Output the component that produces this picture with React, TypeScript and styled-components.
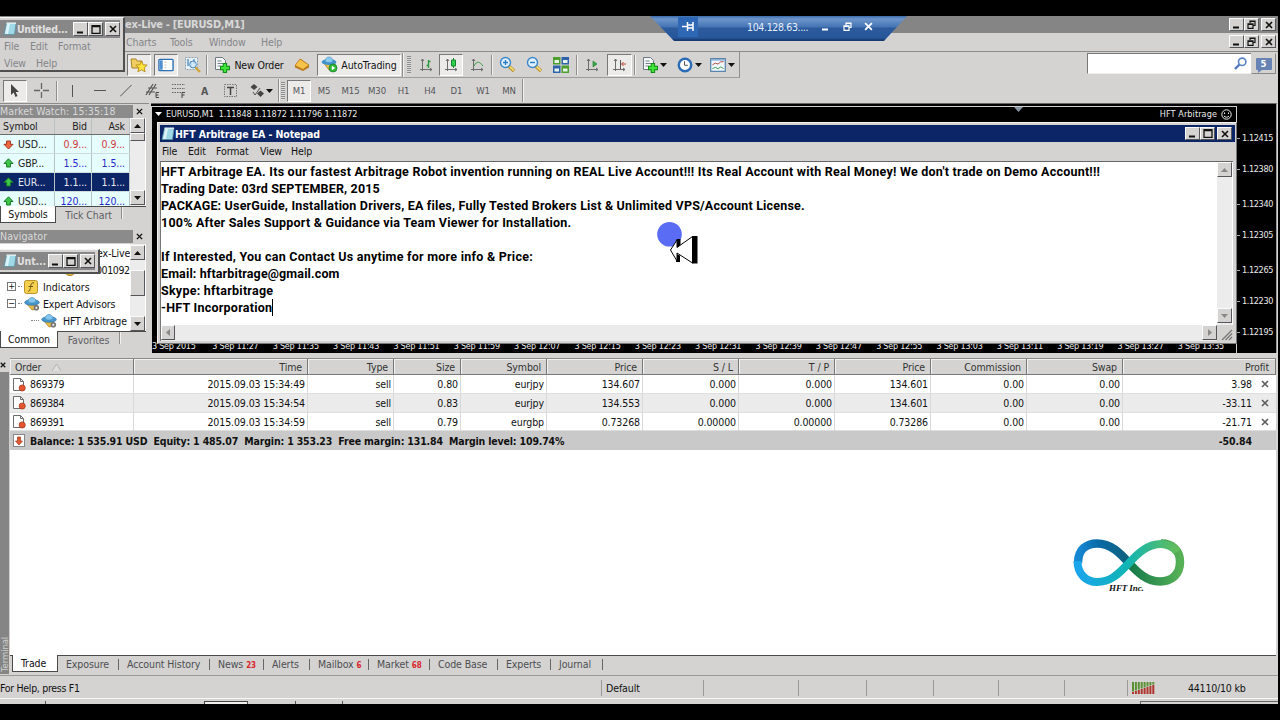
import React from "react";
import styled, { createGlobalStyle, css } from "styled-components";

const Global = createGlobalStyle`
  body { margin: 0; background: #000; }
  * { box-sizing: border-box; }
  svg { display: block; flex: none; }
`;

const ui = `"DejaVu Sans Condensed", "DejaVu Sans", sans-serif`;
const face = "#d4d3d1";

const raised = css`
  background: ${face};
  border: 1px solid;
  border-color: #fbfbfb #55565a #55565a #fbfbfb;
`;
const sunken = css`
  background: #ecebea;
  border: 1px solid;
  border-color: #77787a #fff #fff #77787a;
`;

const Screen = styled.div`
  position: relative;
  width: 1280px;
  height: 720px;
  padding-top: 16px;
  background: #000;
  overflow: hidden;
  font: 10.5px/14px ${ui};
  letter-spacing: -0.1px;
  color: #111;
  white-space: nowrap;
`;
const Desktop = styled.div`
  display: flex;
  flex-direction: column;
  width: 1278px;
  height: 688px;
  background: ${face};
  overflow: hidden;
`;

const T = styled.span<{ $ls?: number; $color?: string }>`
  display: block;
  flex: none;
  letter-spacing: ${(p) => p.$ls ?? -0.1}px;
  color: ${(p) => p.$color ?? "inherit"};
`;

/* ---------- main window bars ---------- */
const TitleBar = styled.div`
  flex: none;
  display: flex;
  align-items: center;
  justify-content: space-between;
  height: 17px;
  padding: 0 2px 0 125px;
  background: #858585;
  color: #d8d8d8;
  font-weight: bold;
  font-size: 11px;
`;
const MenuBar = styled.div`
  flex: none;
  display: flex;
  align-items: center;
  height: 19px;
  padding: 0 2px 1px 126px;
  border-bottom: 1px solid #8c8c8c;
  color: #85868a;
`;
const MenuItem = styled.div<{ $w: number }>`
  flex: none;
  width: ${(p) => p.$w}px;
`;
const Buttons = styled.div`
  display: flex;
  margin-left: auto;
`;
const CaptionButton = styled.div<{ $w?: number; $gap?: number; $h?: number }>`
  ${raised}
  display: flex;
  align-items: center;
  justify-content: center;
  width: ${(p) => p.$w ?? 15}px;
  height: ${(p) => p.$h ?? 13}px;
  margin-left: ${(p) => p.$gap ?? 0}px;
`;

const Minimize = ({ c = "#111" }: { c?: string }) => (
  <svg width="9" height="9" viewBox="0 0 9 9"><path d="M1 7.5h6" stroke={c} strokeWidth="2" /></svg>
);
const Maximize = () => (
  <svg width="10" height="9" viewBox="0 0 10 9"><path d="M1 .5h8v8H1zM1 1.5h8" stroke="#111" strokeWidth="1.3" fill="none" /></svg>
);
const Restore = ({ c = "#111" }: { c?: string }) => (
  <svg width="9" height="9" viewBox="0 0 9 9"><path d="M3 3V1h5v4.5H6.2M1 3.8h5v4.5H1zM1 4.4h5M3 1.4h5" stroke={c} strokeWidth="1.2" fill="none" /></svg>
);
const Cross = ({ c = "#111", s = 8 }: { c?: string; s?: number }) => (
  <svg width={s} height={s} viewBox="0 0 8 8"><path d="M1 1l6 6M7 1L1 7" stroke={c} strokeWidth="1.6" /></svg>
);
const Caret = ({ up, c = "#111" }: { up?: boolean; c?: string }) => (
  <svg width="7" height="4" viewBox="0 0 7 4"><path d={up ? "M0 4h7L3.5 0z" : "M0 0h7L3.5 4z"} fill={c} /></svg>
);
const NoteIcon = () => (
  <svg width="14" height="14" viewBox="0 0 14 14">
    <path d="M3.5 1.5h9.5l-1.5 11H1z" fill="#9fd8e6" stroke="#5e8fa0" strokeWidth=".8" />
    <path d="M4 2h3L5 12H2z" fill="#d9f3f8" />
    <path d="M3.5 1.2h9.5" stroke="#eaf8fb" strokeWidth="1.4" />
  </svg>
);

/* ---------- toolbars ---------- */
const Toolbar = styled.div<{ $h: number; $pl: number; $w?: number }>`
  flex: none;
  display: flex;
  align-items: center;
  height: ${(p) => p.$h}px;
  padding-left: ${(p) => p.$pl}px;
`;
const Band = styled.div<{ $h: number }>`
  flex: none;
  display: flex;
  align-items: center;
  height: ${(p) => p.$h}px;
  border-right: 1px solid #8f8f8f;
  border-bottom: 1px solid #9c9c9c;
`;
const Slot = styled.div<{ $w: number; $on?: boolean; $ml?: number; $gap?: number }>`
  flex: none;
  display: flex;
  align-items: center;
  justify-content: center;
  gap: ${(p) => p.$gap ?? 2}px;
  width: ${(p) => p.$w}px;
  height: 22px;
  margin-left: ${(p) => p.$ml ?? 0}px;
  ${(p) => p.$on && sunken}
`;
const Sep = styled.div<{ $ml?: number; $h?: number }>`
  flex: none;
  width: 2px;
  height: ${(p) => p.$h ?? 20}px;
  margin-left: ${(p) => p.$ml ?? 0}px;
  border-left: 1px solid #8d8d8d;
  border-right: 1px solid #f2f2f2;
`;
const Grip = styled.div<{ $tight?: boolean }>`
  flex: none;
  width: 4px;
  height: 18px;
  margin: ${(p) => (p.$tight ? "0 2px 0 1px" : "0 3px")};
  background: repeating-linear-gradient(#8a8a8a 0 1px, #dedede 1px 2px);
`;
const Period = styled(Slot)`
  color: #55565a;
  font-size: 9.5px;
`;
const SearchBox = styled.div`
  display: flex;
  align-items: center;
  justify-content: flex-end;
  width: 164px;
  height: 21px;
  margin: -3px 0 0 auto;
  padding-right: 4px;
  background: #fff;
  border: 1px solid #77787a;
  border-right: 0;
  border-bottom-color: #eee;
`;
const ChatButton = styled.div`
  ${raised}
  display: flex;
  align-items: center;
  justify-content: center;
  width: 25px;
  height: 21px;
  margin: -3px 2px 0 0;
  border-color: ${face} #888 #888 ${face};
`;
const ChatBubble = styled.div`
  position: relative;
  width: 16px;
  height: 12px;
  border-radius: 1px;
  background: #6683b4;
  color: #fff;
  font: bold 9.5px/12px ${ui};
  text-align: center;
  &::after {
    content: "";
    position: absolute;
    left: 2px;
    top: 12px;
    border-top: 3px solid #6683b4;
    border-right: 4px solid transparent;
  }
`;

const Axes = ({ children }: { children?: React.ReactNode }) => (
  <svg width="15" height="16" viewBox="0 0 15 16">
    <path d="M3.5 2v12M1 12.5h12M2 4l1.5-2L5 4M11 11l2 1.5L11 14" stroke="#6c6c6c" fill="none" />
    {children}
  </svg>
);
const Lens = ({ minus }: { minus?: boolean }) => (
  <svg width="17" height="17" viewBox="0 0 17 17">
    <path d="M9.5 10l5.5 5" stroke="#b8912e" strokeWidth="3.4" />
    <path d="M10.5 10.5l4.3 4" stroke="#ffe57a" strokeWidth="1.6" />
    <circle cx="6.5" cy="6.5" r="5" fill="#dff1ff" stroke="#3c86c8" strokeWidth="1.4" />
    <path d={minus ? "M4 6.5h5" : "M4 6.5h5M6.5 4v5"} stroke="#2e7cc0" strokeWidth="1.4" />
  </svg>
);
const NewPage = () => (
  <svg width="17" height="18" viewBox="0 0 17 18">
    <path d="M1.5 1.5h7l3 3v9h-10z" fill="#f4f6f7" stroke="#6f7a80" />
    <path d="M3.5 5h4M3.5 7.5h6M3.5 10h3" stroke="#77848c" />
    <path d="M10.9 7v10M6 12h10" stroke="#128b12" strokeWidth="4.4" />
    <path d="M10.9 8v8M7 12h8" stroke="#3ee43b" strokeWidth="2.4" />
  </svg>
);
const Hat = () => (
  <svg width="17" height="16" viewBox="0 0 17 16">
    <path d="M3 8l5 6 5-1v-4z" fill="#e8bd45" stroke="#a3791d" strokeWidth=".7" />
    <ellipse cx="8" cy="6.5" rx="7.4" ry="2.8" fill="#4697cf" stroke="#26699c" strokeWidth=".6" />
    <path d="M4 6c0-6 8-6 8 0-2 1.4-6 1.4-8 0z" fill="#85c6ee" stroke="#3b87bb" strokeWidth=".6" />
    <circle cx="12.3" cy="11.8" r="2.8" fill="#777" />
    <circle cx="12.3" cy="11.8" r="1.1" fill="#eee" />
  </svg>
);

/* ---------- workspace ---------- */
const Workspace = styled.div`
  flex: none;
  display: flex;
  height: 251px;
`;
const Side = styled.div`
  flex: none;
  display: flex;
  flex-direction: column;
  width: 149px;
  border-top: 1px solid #8c8c8c;
`;
const PanelTitle = styled.div<{ $h: number; $mt?: number }>`
  flex: none;
  display: flex;
  align-items: center;
  height: ${(p) => p.$h}px;
  margin-top: ${(p) => p.$mt ?? 0}px;
`;
const PanelName = styled.div`
  width: 133px;
  height: 13px;
  margin-right: 3px;
  background: #8b8b8b;
  color: #d9d9d9;
  line-height: 12px;
`;
const PanelBody = styled.div<{ $h: number }>`
  flex: none;
  display: flex;
  width: 146px;
  height: ${(p) => p.$h}px;
  overflow: hidden;
  background: #fff;
`;
const Quotes = styled.div`
  width: 130px;
`;
const QuoteRow = styled.div<{ $head?: boolean; $sel?: boolean }>`
  display: grid;
  grid-template-columns: 55px 37px 38px;
  height: ${(p) => (p.$head ? 17 : 19)}px;
  align-items: center;
  background: ${(p) => (p.$head ? face : p.$sel ? "#0c2566" : "#e6fdfe")};
  color: ${(p) => (p.$sel ? "#e4e8f4" : "#222")};
  border-bottom: 1px solid ${(p) => (p.$head ? "#6c6c6c" : "#cfdcdd")};
  overflow: hidden;
`;
const QuoteCell = styled.div<{ $color?: string; $left?: boolean }>`
  display: flex;
  align-items: center;
  justify-content: ${(p) => (p.$left ? "flex-start" : "flex-end")};
  gap: 4px;
  height: 100%;
  padding: 0 4px 0 ${(p) => (p.$left ? 3 : 0)}px;
  border-right: 1px solid #b9c2c3;
  color: ${(p) => p.$color ?? "inherit"};
`;
const Scroll = styled.div<{ $w?: number }>`
  flex: none;
  display: flex;
  flex-direction: column;
  width: ${(p) => p.$w ?? 15}px;
  background: #ececec;
`;
const ScrollPart = styled.div<{ $h: number; $mt?: number; $w?: number }>`
  ${raised}
  flex: none;
  display: flex;
  align-items: center;
  justify-content: center;
  width: ${(p) => (p.$w ? p.$w + "px" : "auto")};
  height: ${(p) => p.$h}px;
  margin-top: ${(p) => p.$mt ?? 0}px;
`;
const SideTabs = styled.div`
  flex: none;
  display: flex;
  height: 17px;
  width: 146px;
  color: #5f6064;
  border-top: 1px solid #4a4a4a;
`;
const SideTab = styled.div<{ $on?: boolean; $w: number }>`
  width: ${(p) => p.$w}px;
  text-align: center;
  line-height: 16px;
  ${(p) =>
    p.$on &&
    css`
      margin-top: -1px;
      height: 17px;
      background: #fff;
      color: #111;
      border: 1px solid #4a4a4a;
      border-top: 0;
    `}
`;
const Tree = styled.div`
  width: 130px;
  overflow: hidden;
`;
const TreeRow = styled.div<{ $pl: number; $gap?: number }>`
  display: flex;
  align-items: center;
  gap: ${(p) => p.$gap ?? 5}px;
  height: 17px;
  padding-left: ${(p) => p.$pl}px;
`;
const Expander = styled.div`
  flex: none;
  display: flex;
  align-items: center;
  justify-content: center;
  width: 9px;
  height: 9px;
  border: 1px solid #777;
  font: 9px/7px ${ui};
`;
const Dots = styled.div<{ $w: number }>`
  flex: none;
  width: ${(p) => p.$w}px;
  border-top: 1px dotted #888;
`;

const Chart = styled.div`
  position: relative;
  display: flex;
  width: 1126px;
  height: 250px;
  margin-left: 2px;
  padding-top: 2px;
  background: #000;
  border-top: 1px solid #666;
  border-right: 1px solid #999;
  color: #ececec;
  overflow: hidden;
`;
const Plot = styled.div`
  display: flex;
  flex-direction: column;
  justify-content: space-between;
  width: 1086px;
  border: 1px solid #cfcfcf;
  border-bottom: 0;
`;
const PlotHead = styled.div`
  display: flex;
  align-items: center;
  height: 14px;
  padding: 0 4px 0 3px;
  gap: 4px;
  font-size: 9px;
`;
const TimeAxis = styled.div`
  display: flex;
  height: 14px;
  font-size: 9px;
  line-height: 14px;
`;
const TimeLabel = styled.div`
  flex: none;
  width: 60.35px;
  letter-spacing: -0.25px;
`;
const PriceAxis = styled.div`
  display: flex;
  flex-direction: column;
  padding-top: 24px;
  font-size: 9px;
`;
const Price = styled.div<{ $h: number }>`
  display: flex;
  align-items: center;
  gap: 2px;
  height: 16px;
  margin-bottom: ${(p) => p.$h - 16}px;
  letter-spacing: -0.35px;
  &::before { content: ""; width: 3px; border-top: 1px solid #aaa; }
`;

/* ---------- notepad ---------- */
const Notepad = styled.div`
  position: absolute;
  left: 157px;
  top: 122px;
  display: flex;
  flex-direction: column;
  width: 1080px;
  height: 222px;
  padding: 2px 1px 2px 2px;
  background: ${face};
  border: 1px solid;
  border-color: #f4f4f4 #77787a #77787a #f4f4f4;
`;
const NoteTitle = styled.div`
  flex: none;
  display: flex;
  align-items: center;
  height: 17px;
  padding: 0 3px 0 1px;
  background: #0c2566;
  color: #fff;
  font-weight: bold;
`;
const NoteMenu = styled.div`
  flex: none;
  display: flex;
  height: 19px;
  padding: 2px 0 0 2px;
`;
const NoteBody = styled.div`
  flex: 1;
  display: flex;
  margin-right: 2px;
  border-top: 1px solid #666;
  border-left: 1px solid #777;
  background: #fff;
`;
const NoteText = styled.div`
  width: 1056px;
  padding-top: 1px;
  color: #000;
  font: bold 12.5px/17px Roboto, sans-serif;
`;
const NoteLine = styled.div<{ $ls?: number }>`
  display: flex;
  height: 17px;
  letter-spacing: ${(p) => p.$ls ?? 0}px;
`;
const TextCaret = styled.span`
  width: 1px;
  height: 17px;
  background: #000;
`;
const NoteFoot = styled.div`
  flex: none;
  display: flex;
  justify-content: space-between;
  height: 16px;
  margin-right: 2px;
  background: #ebebeb;
  border-left: 1px solid #777;
`;
const NoteFootEnd = styled.div`
  display: flex;
`;

/* ---------- floating windows ---------- */
const Floating = styled.div<{ $y: number; $w: number; $h: number }>`
  position: absolute;
  left: 0;
  top: ${(p) => p.$y}px;
  width: ${(p) => p.$w}px;
  height: ${(p) => p.$h}px;
  padding: 2px 3px 0 0;
  background: ${face};
  border-top: 1px solid #f6f6f6;
  border-right: 2px solid #4f4f4f;
  border-bottom: 2px solid #4f4f4f;
  color: #85868a;
`;
const FloatTitle = styled.div`
  display: flex;
  align-items: center;
  height: 18px;
  padding: 0 0 0 3px;
  background: #878787;
  color: #e0e0e0;
  font-weight: bold;
`;
const FloatMenu = styled.div`
  display: flex;
  height: 17px;
  padding: 1px 0 0 4px;
`;
const Remote = styled.div`
  position: absolute;
  left: 650px;
  top: 16px;
  display: flex;
  align-items: center;
  width: 257px;
  height: 25px;
  padding-left: 28px;
  padding-bottom: 3px;
  clip-path: polygon(0 0, 100% 0, 234px 100%, 24px 100%);
  background: linear-gradient(#3c6cab 0, #6d95cb 3px, #4474b4 11px, #2c5a9d 12px, #27579b 22px, #173a70 24px);
  color: #e6eefa;
  border-bottom: 1px solid #173a70;
`;
const PinBox = styled.div`
  display: flex;
  align-items: center;
  justify-content: center;
  width: 20px;
  height: 20px;
  margin-right: 49px;
  background: #2e68b5;
`;

/* ---------- terminal ---------- */
const Terminal = styled.div`
  flex: none;
  display: flex;
  height: 322px;
  padding-top: 4px;
  border-bottom: 1px solid #999;
`;
const Rail = styled.div`
  width: 10px;
  display: flex;
  flex-direction: column;
`;
const RailClose = styled.div`
  height: 14px;
  padding: 4px 0 0 0;
`;
const RailName = styled.div`
  width: 9px;
  height: 302px;
  padding-top: 2px;
  writing-mode: vertical-rl;
  transform: rotate(180deg);
  background: #858585;
  color: #cfcfcf;
  font-size: 9.5px;
  line-height: 9px;
`;
const TradePane = styled.div`
  display: flex;
  flex-direction: column;
  width: 1266px;
`;
const columns = "124px 174px 86px 67px 86px 96px 96px 96px 96px 96px 96px 1fr";
const TradeHead = styled.div`
  display: grid;
  grid-template-columns: ${columns};
  height: 17px;
  border-top: 1px solid #8a8a8a;
  border-bottom: 1px solid #77787a;
`;
const HeadCell = styled.div<{ $first?: boolean; $last?: boolean }>`
  display: flex;
  align-items: center;
  justify-content: ${(p) => (p.$first ? "flex-start" : "flex-end")};
  gap: 11px;
  padding: 1px ${(p) => (p.$last ? 6 : 5)}px 0 ${(p) => (p.$first ? 5 : 0)}px;
  border-right: 1px solid #77787a;
  box-shadow: inset 1px 1px 0 #f2f2f2;
  color: #333;
`;
const TradeRow = styled.div<{ $alt?: boolean }>`
  display: grid;
  grid-template-columns: ${columns};
  height: 18.8px;
  background: ${(p) => (p.$alt ? "#ebebeb" : "#fff")};
  border-bottom: 1px solid #dedede;
  line-height: 18px;
`;
const TradeCell = styled.div`
  display: flex;
  align-items: center;
  justify-content: flex-end;
  padding-right: 2px;
  border-right: 1px solid #d9d9d9;
  &:first-child { justify-content: flex-start; gap: 4px; padding-left: 2px; }
  &:last-child { gap: 9px; padding-right: 7px; border-right: 0; }
`;
const Balance = styled.div`
  display: flex;
  align-items: center;
  gap: 5px;
  height: 19px;
  padding: 0 24px 0 3px;
  background: #c9c9c9;
  font-weight: bold;
`;
const Blank = styled.div`
  flex: 1;
  background: #fff;
`;
const TradeTabs = styled.div`
  flex: none;
  display: flex;
  height: 20px;
  border-top: 1px solid #4a4a4a;
  color: #4d4e52;
`;
const TradeTab = styled.div<{ $w: number; $on?: boolean }>`
  position: relative;
  display: flex;
  flex: none;
  gap: 3px;
  width: ${(p) => p.$w}px;
  padding-left: 8px;
  line-height: 16px;
  &::after {
    content: "";
    position: absolute;
    right: 0;
    top: 3px;
    height: 11px;
    border-right: 1px solid #66676a;
  }
  ${(p) =>
    p.$on &&
    css`
      margin: -1px 0 0 2px;
      height: 17px;
      background: #fff;
      color: #111;
      border: 1px solid #4a4a4a;
      border-top: 0;
      &::after { display: none; }
    `}
`;
const Count = styled.span`
  color: #d9262c;
  font: bold 8px/19px ${ui};
`;
const StatusBar = styled.div`
  flex: none;
  display: flex;
  align-items: center;
  height: 22px;
  padding-top: 1px;
`;
const StatusCell = styled.div<{ $w: number; $pl?: number; $line?: boolean }>`
  display: flex;
  flex: none;
  align-items: center;
  gap: 33px;
  width: ${(p) => p.$w}px;
  height: 16px;
  padding-left: ${(p) => p.$pl ?? 4}px;
  border-left: ${(p) => (p.$line === false ? "0" : "1px solid #999")};
`;
const Taskbar = styled.div`
  flex: none;
  display: flex;
  height: 6px;
  border-top: 1px solid #f6f6f6;
  padding-top: 2px;
`;
const Task = styled.div<{ $ml: number; $w: number; $on?: boolean }>`
  width: ${(p) => p.$w}px;
  margin-left: ${(p) => p.$ml}px;
  border-right: 1px solid #555;
  ${(p) => p.$on && "border-left: 1px solid #444; border-top: 1px solid #444; background: #eee;"}
`;
const Tray = styled.div`
  width: 138px;
  margin-left: auto;
  border-top: 1px solid #666;
  border-left: 1px solid #666;
`;

const Overlay = styled.div<{ $x: number; $y: number }>`
  position: absolute;
  left: ${(p) => p.$x}px;
  top: ${(p) => p.$y}px;
`;
const Signature = styled.div`
  margin: -4px 0 0 37px;
  color: #111;
  font: italic bold 9px/9px "Liberation Serif", serif;
`;

const quotes: [string, string, string, string, boolean][] = [
  ["USD...", "0.9...", "0.9...", "#cf3a3a", false],
  ["GBP...", "1.5...", "1.5...", "#2a2acb", false],
  ["EUR...", "1.1...", "1.1...", "#e4e8f4", true],
  ["USD...", "120...", "120...", "#2a2acb", false],
];
const heads = ["Order", "Time", "Type", "Size", "Symbol", "Price", "S / L", "T / P", "Price", "Commission", "Swap", "Profit"];
const trades = [
  ["869379", "2015.09.03 15:34:49", "sell", "0.80", "eurjpy", "134.607", "0.000", "0.000", "134.601", "0.00", "0.00", "3.98"],
  ["869384", "2015.09.03 15:34:54", "sell", "0.83", "eurjpy", "134.553", "0.000", "0.000", "134.601", "0.00", "0.00", "-33.11"],
  ["869391", "2015.09.03 15:34:59", "sell", "0.79", "eurgbp", "0.73268", "0.00000", "0.00000", "0.73286", "0.00", "0.00", "-21.71"],
];
const times = ["2015", "11:27", "11:35", "11:43", "11:51", "11:59", "12:07", "12:15", "12:23", "12:31", "12:39", "12:47", "12:55", "13:03", "13:11", "13:19", "13:27", "13:35"];
const prices: [string, number][] = [["1.12415", 31], ["1.12380", 35], ["1.12340", 31], ["1.12305", 35], ["1.12265", 31], ["1.12230", 31], ["1.12195", 20]];
const notes: [string, number][] = [
  ["HFT Arbitrage EA. Its our fastest Arbitrage Robot invention running on REAL Live Account!!! Its Real Account with Real Money! We don't trade on Demo Account!!!", 0.232],
  ["Trading Date: 03rd SEPTEMBER, 2015", 0.15],
  ["PACKAGE: UserGuide, Installation Drivers, EA files, Fully Tested Brokers List & Unlimited VPS/Account License.", 0.185],
  ["100% After Sales Support & Guidance via Team Viewer for Installation.", 0.21],
  ["", 0],
  ["If Interested, You can Contact Us anytime for more info & Price:", 0.25],
  ["Email: hftarbitrage@gmail.com", 0.13],
  ["Skype: hftarbitrage", 0.25],
  ["-HFT Incorporation", 0.25],
];
const periods: [string, number][] = [["M5", 26], ["M15", 27], ["M30", 26], ["H1", 27], ["H4", 26], ["D1", 27], ["W1", 26], ["MN", 26]];
const tabs: [string, number, string?][] = [["Exposure", 61], ["Account History", 91], ["News", 54, "23"], ["Alerts", 46], ["Mailbox", 59, "6"], ["Market", 61, "68"], ["Code Base", 68], ["Experts", 53], ["Journal", 52]];
const statusCells = [95, 68, 67, 65, 66, 63];

const QuoteArrow = ({ up }: { up: boolean }) => (
  <svg width="11" height="11" viewBox="0 0 11 11">
    <path d={up ? "M5.5 .8L10 5.5H7.4V9H3.6V5.5H1z" : "M5.5 10L10 5.3H7.4V2H3.6v3.3H1z"} fill={up ? "#40c64b" : "#ef6a40"} stroke={up ? "#167a24" : "#a3341c"} />
  </svg>
);
const OrderIcon = () => (
  <svg width="14" height="15" viewBox="0 0 14 15">
    <path d="M1.5 1.5h7l3 3v9h-10z" fill="#fff" stroke="#6b6b6b" />
    <path d="M8.5 1.5v3h3" fill="none" stroke="#6b6b6b" />
    <circle cx="10.2" cy="11" r="3.1" fill="#e4552f" stroke="#9c3318" strokeWidth=".7" />
  </svg>
);

export default function App() {
  return (
    <Screen>
      <Global />
      <Desktop>
        <TitleBar>
          <T $ls={-0.33}>ex-Live - [EURUSD,M1]</T>
          <Buttons>
            <CaptionButton><Minimize /></CaptionButton>
            <CaptionButton><Restore /></CaptionButton>
            <CaptionButton $gap={2}><Cross /></CaptionButton>
          </Buttons>
        </TitleBar>
        <MenuBar>
          <MenuItem $w={44}>Charts</MenuItem>
          <MenuItem $w={39}>Tools</MenuItem>
          <MenuItem $w={52}>Window</MenuItem>
          <MenuItem $w={30}>Help</MenuItem>
          <Buttons>
            <CaptionButton><Minimize /></CaptionButton>
            <CaptionButton><Restore /></CaptionButton>
            <CaptionButton $gap={2}><Cross /></CaptionButton>
          </Buttons>
        </MenuBar>

        <Toolbar $h={26} $pl={0}>
          <Band $h={26}>
            <Slot $w={24} $on $ml={127}>
              <svg width="18" height="18" viewBox="0 0 18 18">
                <path d="M1 3h5l1 2h5v7H2z" fill="#f0cf62" stroke="#a98426" />
                <path d="M11.5 5l1.7 3.7 4 .4-3 2.7.9 4-3.6-2-3.6 2 .9-4-3-2.7 4-.4z" fill="#ffe23e" stroke="#b58c18" strokeWidth=".9" />
              </svg>
            </Slot>
            <Slot $w={24} $on $ml={3}>
              <svg width="16" height="14" viewBox="0 0 17 14">
                <rect x="1" y="1" width="15" height="12" rx="1" fill="#fff" stroke="#2f6fb4" strokeWidth="1.5" />
                <path d="M2 2h3v10H2z" fill="#4d8fd0" />
                <path d="M7 4h2M7 7h2M7 10h2" stroke="#bbb" />
              </svg>
            </Slot>
            <Slot $w={28}>
              <svg width="17" height="17" viewBox="0 0 17 17">
                <path d="M1.5 1.5h12v12h-12z" fill="#e6f0f5" stroke="#93a5ae" strokeDasharray="2 1" />
                <path d="M4 3v7M7 5v6M10 3v5" stroke="#4f88b4" strokeWidth="1.3" />
                <path d="M11 11l5 5" stroke="#d1a63a" strokeWidth="2.4" />
                <circle cx="9" cy="8.5" r="3.4" fill="#cfe9f8cc" stroke="#4c8abb" />
              </svg>
            </Slot>
            <Sep />
            <Slot $w={82} $gap={3}><NewPage /><T $ls={-0.15}>New Order</T></Slot>
            <Slot $w={24}>
              <svg width="16" height="14" viewBox="0 0 16 14">
                <path d="M1 8l6-7 8 6v2.5L9 13 1 9.500z" fill="#b9781c" />
                <path d="M1 7.500L6 1l9 6-6 4.500z" fill="#f5c24a" stroke="#b9781c" strokeWidth=".8" />
              </svg>
            </Slot>
            <Slot $w={84} $on $ml={3} $gap={3}>
              <svg width="17" height="17" viewBox="0 0 17 17">
                <path d="M2 6l6 8 6-3V6z" fill="#e7c04c" stroke="#a3791d" strokeWidth=".7" />
                <ellipse cx="8" cy="6" rx="7.4" ry="3" fill="#3f92cc" />
                <path d="M4 5.5c0-6 8-6 8 0-2 1.6-6 1.6-8 0z" fill="#8ccbf0" stroke="#3b87bb" strokeWidth=".6" />
                <circle cx="12" cy="12" r="4" fill="#2fb93a" stroke="#137a1d" strokeWidth=".7" />
                <path d="M10.8 9.8v4.4l3.4-2.2z" fill="#fff" />
              </svg>
              <T $ls={-0.1}>AutoTrading</T>
            </Slot>
            <Sep $ml={1} $h={24} />
            <Grip />
            <Slot $w={25}><Axes><path d="M9.5 3v8M7.5 8.5h2M9.5 4.5h2" stroke="#2d9a3c" strokeWidth="1.4" /></Axes></Slot>
            <Slot $w={24} $on><Axes><path d="M9.5 1v10" stroke="#14852a" /><path d="M7.5 3h4v6h-4z" fill="#33cf4e" stroke="#14852a" /></Axes></Slot>
            <Slot $w={28}><Axes><path d="M4 9c3-6 6-4 9 0" stroke="#2d9a3c" fill="none" /></Axes></Slot>
            <Sep />
            <Slot $w={28}><Lens /></Slot>
            <Slot $w={26}><Lens minus /></Slot>
            <Slot $w={27}>
              <svg width="16" height="16" viewBox="0 0 16 16">
                <path d="M0 0h7.5v7.5H0zM8.5 8.5H16V16H8.5z" fill="#4c9f2c" />
                <path d="M8.5 0H16v7.5H8.5zM0 8.5h7.5V16H0z" fill="#2f62ad" />
                <path d="M1.5 3h4.500v3h-4.500zM10 3h4.500v3H10zM1.500 11.500H6v3H1.500zM10 11.500h4.500v3H10z" fill="#e6f3e8" />
              </svg>
            </Slot>
            <Sep $ml={2} />
            <Slot $w={29}><Axes><path d="M8 4v6l4-3z" fill="#39a848" stroke="#187a28" strokeWidth=".6" /></Axes></Slot>
            <Slot $w={25} $on><Axes><path d="M8.500 3v9" stroke="#555" /><path d="M14 7h-4M11.500 5L9.500 7l2 2" stroke="#b5482e" fill="none" /></Axes></Slot>
            <Sep $ml={2} />
            <Slot $w={37} $gap={1}><NewPage /><Caret /></Slot>
            <Slot $w={32}>
              <svg width="16" height="16" viewBox="0 0 17 17">
                <circle cx="8.500" cy="8.500" r="6.600" fill="#fff" stroke="#2c6cb6" strokeWidth="2.600" />
                <path d="M8 4.500v4.300h3.500" stroke="#444" fill="none" />
              </svg>
              <Caret />
            </Slot>
            <Slot $w={34}>
              <svg width="16" height="14" viewBox="0 0 17 15">
                <rect x=".7" y=".7" width="15.600" height="13.600" fill="#eef6fb" stroke="#5580a8" strokeWidth="1.300" />
                <path d="M1 2h15" stroke="#7fa9cf" strokeWidth="1.500" />
                <path d="M2.500 7.500l3-2 3 1 3-2.500h3" stroke="#b04636" fill="none" />
                <path d="M2.500 11.500l3-1.500 3 1.500 3-2 3 2" stroke="#3c9a48" fill="none" />
              </svg>
              <Caret />
            </Slot>
          </Band>
          <SearchBox>
            <svg width="13" height="13" viewBox="0 0 13 13">
              <path d="M6 7l-5 5" stroke="#4f78bd" strokeWidth="2.400" />
              <circle cx="8.200" cy="4.800" r="3.700" fill="#fff" stroke="#5b85c8" strokeWidth="1.600" />
            </svg>
          </SearchBox>
          <ChatButton><ChatBubble>5</ChatBubble></ChatButton>
        </Toolbar>

        <Toolbar $h={25} $pl={3}>
          <Slot $w={24} $on>
            <svg width="10" height="15" viewBox="0 0 10 15"><path d="M1 1v11l2.700-2.500L5.500 14l2-1-1.800-4H9z" fill="#444" /></svg>
          </Slot>
          <Slot $w={28}>
            <svg width="15" height="15" viewBox="0 0 15 15"><path d="M7.500 0v6M7.500 9v6M0 7.500h6M9 7.500h6" stroke="#666" strokeWidth="1.300" /></svg>
          </Slot>
          <Sep $ml={1} />
          <Slot $w={29}><svg width="3" height="12" viewBox="0 0 3 12"><path d="M1.500 0v12" stroke="#555" /></svg></Slot>
          <Slot $w={25}><svg width="12" height="3" viewBox="0 0 12 3"><path d="M0 1.500h12" stroke="#555" /></svg></Slot>
          <Slot $w={28}><svg width="12" height="12" viewBox="0 0 12 12"><path d="M0 11.500L11.500 0" stroke="#555" /></svg></Slot>
          <Slot $w={25}>
            <svg width="15" height="15" viewBox="0 0 15 15">
              <path d="M1 12L8 1M4 12l7-11M1 9h9M3 5h9" stroke="#555" strokeWidth="1.200" />
              <path d="M14 9.500h-3v5h3M11 12h2.500" stroke="#444" fill="none" />
            </svg>
          </Slot>
          <Slot $w={27}>
            <svg width="15" height="15" viewBox="0 0 15 15">
              <path d="M1 1.500h13M1 5.500h13M1 9.500h9" stroke="#666" strokeDasharray="1.500 1" />
              <path d="M14 9.500h-3V15M11 12h2.500" stroke="#444" fill="none" />
            </svg>
          </Slot>
          <Slot $w={25}><T $color="#555"><b>A</b></T></Slot>
          <Slot $w={27}>
            <svg width="13" height="13" viewBox="0 0 13 13">
              <rect x=".5" y=".5" width="12" height="12" fill="none" stroke="#777" strokeDasharray="1.500 1" />
              <path d="M3 3.500h7M6.500 3.500V11" stroke="#444" strokeWidth="1.500" />
            </svg>
          </Slot>
          <Slot $w={34}>
            <svg width="14" height="13" viewBox="0 0 14 13">
              <path d="M4 0l3.500 3-3.500 3-3.500-3zM7 9.500l3.500-3L14 9.500 10.500 13z" fill="#444" />
              <path d="M3 8l2 3 5-7" stroke="#555" fill="none" />
            </svg>
            <Caret />
          </Slot>
          <Sep $h={23} />
          <Grip $tight />
          <Period $w={24} $on>M1</Period>
          {periods.map(([p, w]) => <Period key={p} $w={w}>{p}</Period>)}
          <Sep $h={23} />
        </Toolbar>

        <Workspace>
          <Side>
            <PanelTitle $h={14}><PanelName><T $ls={0.1}>Market Watch: 15:35:18</T></PanelName><Cross s={7} /></PanelTitle>
            <PanelBody $h={88}>
              <Quotes>
                <QuoteRow $head>
                  <QuoteCell $left>Symbol</QuoteCell><QuoteCell>Bid</QuoteCell><QuoteCell>Ask</QuoteCell>
                </QuoteRow>
                {quotes.map(([s, b, a, c, sel], i) => (
                  <QuoteRow key={i} $sel={sel}>
                    <QuoteCell $left><QuoteArrow up={i > 0} />{s}</QuoteCell>
                    <QuoteCell $color={c}>{b}</QuoteCell>
                    <QuoteCell $color={c}>{a}</QuoteCell>
                  </QuoteRow>
                ))}
              </Quotes>
              <Scroll>
                <ScrollPart $h={15}><Caret up /></ScrollPart>
                <ScrollPart $h={8} />
                <ScrollPart $h={15} $mt={49}><Caret /></ScrollPart>
              </Scroll>
            </PanelBody>
            <SideTabs>
              <SideTab $on $w={56}>Symbols</SideTab>
              <SideTab $w={65}>Tick Chart</SideTab>
              <Sep $h={12} />
            </SideTabs>
            <PanelTitle $h={15} $mt={6}><PanelName><T $ls={0.1}>Navigator</T></PanelName><Cross s={7} /></PanelTitle>
            <PanelBody $h={87}>
              <Tree>
                <TreeRow $pl={97}>ex-Live</TreeRow>
                <TreeRow $pl={63} $gap={19}>
                  <svg width="14" height="14" viewBox="0 0 14 14"><circle cx="7" cy="7" r="5.500" fill="#f0c443" stroke="#a67f1f" /></svg>
                  <T $ls={-0.4}>001092</T>
                </TreeRow>
                <TreeRow $pl={7} $gap={2}>
                  <Expander>+</Expander><Dots $w={4} />
                  <svg width="14" height="14" viewBox="0 0 14 14">
                    <rect x=".5" y=".5" width="13" height="13" rx="2" fill="#f4d04e" stroke="#b9922a" />
                    <path d="M10 3C7 2 7 5 6.500 7.500S5.500 12 4 11M4.500 6.500h4.500" stroke="#6b5312" fill="none" />
                  </svg>
                  <T $ls={0}>&nbsp;Indicators</T>
                </TreeRow>
                <TreeRow $pl={7} $gap={2}><Expander>−</Expander><Dots $w={4} /><Hat /><T>Expert Advisors</T></TreeRow>
                <TreeRow $pl={31} $gap={2}><Dots $w={8} /><Hat /><T>&nbsp;HFT Arbitrage</T></TreeRow>
              </Tree>
              <Scroll>
                <ScrollPart $h={15} $mt={1}><Caret up /></ScrollPart>
                <ScrollPart $h={26} $mt={10} />
                <ScrollPart $h={15} $mt={20}><Caret /></ScrollPart>
              </Scroll>
            </PanelBody>
            <SideTabs>
              <SideTab $on $w={58}>Common</SideTab>
              <SideTab $w={61}>Favorites</SideTab>
              <Sep $h={12} />
            </SideTabs>
          </Side>

          <Chart>
            <Plot>
              <PlotHead>
                <Caret c="#fff" />
                <T>EURUSD,M1&nbsp; 1.11848 1.11872 1.11796 1.11872</T>
                <Buttons><T $ls={0.1}>HFT Arbitrage</T></Buttons>
                <svg width="11" height="11" viewBox="0 0 11 11">
                  <circle cx="5.500" cy="5.500" r="4.700" fill="none" stroke="#eee" />
                  <path d="M3.500 3.500v1.500M7.500 3.500v1.500M3 7c1.500 1.600 3.500 1.600 5 0" stroke="#eee" fill="none" />
                </svg>
              </PlotHead>
              <TimeAxis>{times.map((t) => <TimeLabel key={t}>3 Sep {t}</TimeLabel>)}</TimeAxis>
            </Plot>
            <PriceAxis>{prices.map(([p, h]) => <Price key={p} $h={h}>{p}</Price>)}</PriceAxis>
          </Chart>
        </Workspace>

        <Terminal>
          <Rail>
            <RailClose><Cross s={6} /></RailClose>
            <RailName>Terminal</RailName>
          </Rail>
          <TradePane>
            <TradeHead>
              {heads.map((h, i) => (
                <HeadCell key={i} $first={i === 0} $last={i === 11}>
                  {h}
                  {i === 0 && <svg width="9" height="7" viewBox="0 0 9 7"><path d="M0 7L4.500 0 9 7" fill="#dedede" stroke="#aaa" strokeWidth=".8" /></svg>}
                </HeadCell>
              ))}
            </TradeHead>
            {trades.map((row, r) => (
              <TradeRow key={r} $alt={r === 1}>
                {row.map((c, i) => (
                  <TradeCell key={i}>
                    {i === 0 && <OrderIcon />}
                    <T $ls={i === 0 ? -0.3 : -0.1}>{c}</T>
                    {i === 11 && <Cross s={8} c="#5c5c5c" />}
                  </TradeCell>
                ))}
              </TradeRow>
            ))}
            <Balance>
              <svg width="12" height="13" viewBox="0 0 12 13">
                <rect x=".5" y=".5" width="11" height="12" fill="#fff" stroke="#888" />
                <path d="M6 11L9.500 7H7.500V3h-3v4h-2z" fill="#e2592f" stroke="#a3341c" strokeWidth=".7" />
              </svg>
              <T $ls={-0.17}>Balance: 1 535.91 USD&nbsp; Equity: 1 485.07&nbsp; Margin: 1 353.23&nbsp; Free margin: 131.84&nbsp; Margin level: 109.74%</T>
              <Buttons>-50.84</Buttons>
            </Balance>
            <Blank />
            <TradeTabs>
              <TradeTab $w={46} $on>Trade</TradeTab>
              {tabs.map(([t, w, n]) => <TradeTab key={t} $w={w}>{t}{n && <Count>{n}</Count>}</TradeTab>)}
            </TradeTabs>
          </TradePane>
        </Terminal>

        <StatusBar>
          <StatusCell $w={601} $pl={0} $line={false}><T $ls={-0.3}>For Help, press F1</T></StatusCell>
          <StatusCell $w={102}>Default</StatusCell>
          {statusCells.map((w, i) => <StatusCell key={i} $w={w} />)}
          <StatusCell $w={150} $pl={4}>
            <svg width="23" height="12" viewBox="0 0 23 12">
              {Array.from({ length: 8 }, (_, i) => (
                <g key={i}>
                  <rect x={i * 2.9} y="0" width="2" height={9.5 - i} fill="#5b8f35" />
                  <rect x={i * 2.9} y={10 - i} width="2" height={2 + i} fill="#b0342e" />
                </g>
              ))}
            </svg>
            <T $ls={-0.2}>44110/10 kb</T>
          </StatusCell>
        </StatusBar>
        <Taskbar>
          <Task $ml={0} $w={46} />
          <Task $ml={158} $w={44} $on />
          <Task $ml={0} $w={48} />
          <Task $ml={0} $w={47} />
          <Tray />
        </Taskbar>
      </Desktop>

      <Notepad>
        <NoteTitle>
          <NoteIcon /><T $ls={-0.1}>HFT Arbitrage EA - Notepad</T>
          <Buttons>
            <CaptionButton><Minimize /></CaptionButton>
            <CaptionButton><Maximize /></CaptionButton>
            <CaptionButton $gap={2}><Cross /></CaptionButton>
          </Buttons>
        </NoteTitle>
        <NoteMenu>
          <MenuItem $w={26}>File</MenuItem><MenuItem $w={28}>Edit</MenuItem><MenuItem $w={44}>Format</MenuItem>
          <MenuItem $w={31}>View</MenuItem><MenuItem $w={30}>Help</MenuItem>
        </NoteMenu>
        <NoteBody>
          <NoteText>
            {notes.map(([t, ls], i) => (
              <NoteLine key={i} $ls={ls}>{t}{i === 8 && <TextCaret />}</NoteLine>
            ))}
          </NoteText>
          <Scroll>
            <ScrollPart $h={15}><Caret up c="#888" /></ScrollPart>
            <ScrollPart $h={15} $mt={131}><Caret c="#888" /></ScrollPart>
          </Scroll>
        </NoteBody>
        <NoteFoot>
          <ScrollPart $h={15} $w={14}><svg width="4" height="7" viewBox="0 0 4 7"><path d="M4 0v7L0 3.500z" fill="#888" /></svg></ScrollPart>
          <NoteFootEnd>
            <ScrollPart $h={15} $w={15}><svg width="4" height="7" viewBox="0 0 4 7"><path d="M0 0v7l4-3.500z" fill="#888" /></svg></ScrollPart>
            <svg width="16" height="16" viewBox="0 0 16 16">
              <path d="M0 0h16v16H0z" fill={face} />
              <path d="M5 15L15 5M8.500 15L15 8.500M12 15l3-3" stroke="#777" strokeWidth="1.300" />
            </svg>
          </NoteFootEnd>
        </NoteFoot>
      </Notepad>

      <Overlay $x={1014} $y={107}>
        <svg width="9" height="5" viewBox="0 0 9 5"><path d="M0 0h9L4.500 5z" fill="#8792a3" /></svg>
      </Overlay>

      <Floating $y={17} $w={125} $h={55}>
        <FloatTitle>
          <NoteIcon /><T $ls={-0.3}>Untitled...</T>
          <Buttons>
            <CaptionButton $h={14}><Minimize /></CaptionButton>
            <CaptionButton $h={14}><Maximize /></CaptionButton>
            <CaptionButton $h={14} $gap={2}><Cross /></CaptionButton>
          </Buttons>
        </FloatTitle>
        <FloatMenu><MenuItem $w={26}>File</MenuItem><MenuItem $w={28}>Edit</MenuItem><MenuItem $w={44}>Format</MenuItem></FloatMenu>
        <FloatMenu><MenuItem $w={32}>View</MenuItem><MenuItem $w={30}>Help</MenuItem></FloatMenu>
      </Floating>

      <Floating $y={249} $w={100} $h={25}>
        <FloatTitle>
          <NoteIcon /><T>Unt...</T>
          <Buttons>
            <CaptionButton $h={14}><Minimize /></CaptionButton>
            <CaptionButton $h={14}><Maximize /></CaptionButton>
            <CaptionButton $h={14} $gap={2}><Cross /></CaptionButton>
          </Buttons>
        </FloatTitle>
      </Floating>

      <Remote>
        <PinBox>
          <svg width="12" height="9" viewBox="0 0 12 9"><path d="M0 4.500h5M5.500 0v9M5.500 3h5M5.500 6h5M11 0v9" stroke="#fff" strokeWidth="1.500" fill="none" /></svg>
        </PinBox>
        <T $ls={-0.35}>104.128.63....</T>
        <Overlay $x={171} $y={6}><Minimize c="#fff" /></Overlay>
        <Overlay $x={193} $y={6}><Restore c="#fff" /></Overlay>
        <Overlay $x={214} $y={6}><Cross c="#fff" s={9} /></Overlay>
      </Remote>

      <Overlay $x={657} $y={222}>
        <svg width="42" height="44" viewBox="0 0 42 44">
          <circle cx="12.500" cy="12.300" r="12.300" fill="#5a6bf4" />
          <path d="M19.500 17h4v7l-3.500 2zM19.500 32l3.500 1.500v6.500h-4zM35 14h5.500v27.500H35z" fill="#000" />
          <path d="M13.500 28L20 18V25.500L35.500 14.500V41L20 31V39z" fill="#fff" stroke="#000" strokeWidth="1" />
        </svg>
      </Overlay>

      <Overlay $x={1072} $y={538}>
        <svg width="114" height="50" viewBox="0 0 114 50">
          <defs>
            <linearGradient id="blueDown" x1="0" x2="1"><stop offset="0" stopColor="#1588d4" /><stop offset=".4" stopColor="#0a6aa8" /><stop offset="1" stopColor="#10617a" /></linearGradient>
            <linearGradient id="rise" x1="0" x2="1"><stop offset="0" stopColor="#1ba5ec" /><stop offset=".5" stopColor="#10b5b4" /><stop offset="1" stopColor="#63bd5c" /></linearGradient>
            <linearGradient id="greenDown" x1="0" x2="1"><stop offset="0" stopColor="#13784a" /><stop offset="1" stopColor="#55b055" /></linearGradient>
          </defs>
          <path d="M6 25C6 11 15 5.500 25 5.500C39 5.500 48 15 57 25" fill="none" stroke="url(#blueDown)" strokeWidth="8.500" />
          <path d="M57 25C66 35 75 43.500 88 43.500C99 43.500 108 37 108 24C108 12 100 5.500 89 5.500" fill="none" stroke="url(#greenDown)" strokeWidth="8.500" />
          <path d="M5.500 23C5.500 36 14 44 25 44C40 44 48 34 57 25C66 15 76 6 89 6C95 6 102 9 105 14" fill="none" stroke="url(#rise)" strokeWidth="8" />
        </svg>
        <Signature>HFT Inc.</Signature>
      </Overlay>
    </Screen>
  );
}
